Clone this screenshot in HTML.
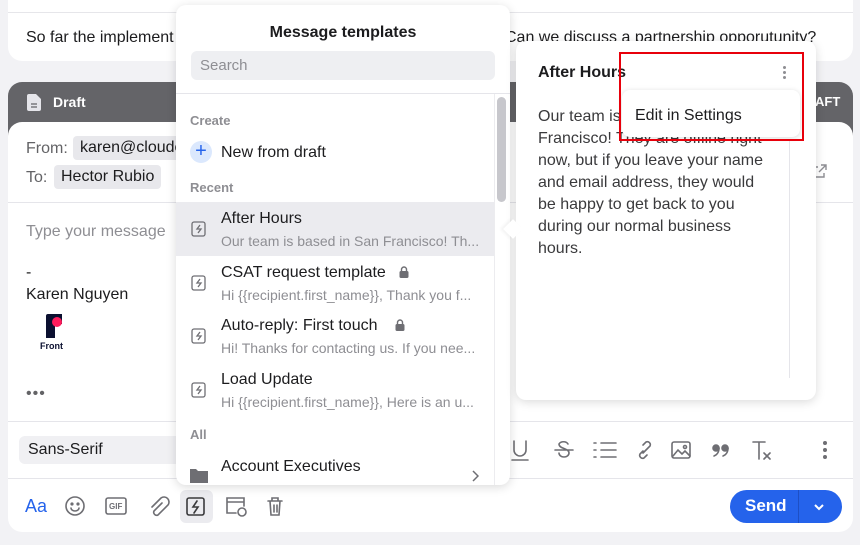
<!DOCTYPE html>
<html><head><meta charset="utf-8"><style>
*{box-sizing:border-box;margin:0;padding:0}
body{width:860px;height:545px;background:#f2f2f5;font-family:"Liberation Sans",Arial,sans-serif;position:relative;overflow:hidden;color:#1c1c1e}
.abs{position:absolute}
.t{white-space:nowrap}
</style></head><body>
<!-- top card -->
<div class="abs" style="left:8px;top:-10px;width:845px;height:71px;background:#fff;border-radius:0 0 14px 14px"></div>
<div class="abs" style="left:8px;top:12px;width:845px;height:1px;background:#e6e6ea"></div>
<div class="abs t" style="left:26px;top:29px;font-size:16px">So far the implement</div>
<div class="abs t" style="left:505px;top:29px;font-size:16px">Can we discuss a partnership opporutunity?</div>

<!-- draft card -->
<div class="abs" style="left:8px;top:82px;width:845px;height:70px;background:#646468;border-radius:14px 14px 0 0"></div>
<svg class="abs" style="left:27px;top:94px" width="15" height="17" viewBox="0 0 15 17"><path d="M2 0h7l5 5v10a2 2 0 0 1-2 2H2a2 2 0 0 1-2-2V2a2 2 0 0 1 2-2z" fill="#e5e5ea"/><path d="M4 10h6M4 13h6" stroke="#646468" stroke-width="1.3"/></svg>
<div class="abs t" style="left:53px;top:94px;font-size:14px;font-weight:bold;color:#fff">Draft</div>
<div class="abs t" style="left:815px;top:94px;font-size:13px;font-weight:bold;color:#fff">AFT</div>
<div class="abs" style="left:8px;top:122px;width:845px;height:410px;background:#fff;border-radius:14px"></div>
<div class="abs t" style="left:26px;top:140px;font-size:16px;color:#636366">From:</div>
<div class="abs t" style="left:73px;top:136px;height:24px;padding:3px 7px;background:#e8e8ec;border-radius:4px;font-size:16px">karen@cloudco.com</div>
<div class="abs t" style="left:26px;top:169px;font-size:16px;color:#636366">To:</div>
<div class="abs t" style="left:54px;top:165px;height:24px;padding:3px 7px;background:#e8e8ec;border-radius:4px;font-size:16px">Hector Rubio</div>
<svg class="abs" style="left:812px;top:163px" width="16" height="16" viewBox="0 0 16 16" fill="none" stroke="#8e8e93" stroke-width="1.4"><path d="M9 2h5v5M14 2L7 9M12 10v4H2V4h4"/></svg>
<div class="abs" style="left:8px;top:202px;width:845px;height:1px;background:#e5e5ea"></div>
<div class="abs t" style="left:26px;top:223px;font-size:16px;color:#8e8e93">Type your message</div>
<div class="abs t" style="left:26px;top:264px;font-size:16px">-</div>
<div class="abs t" style="left:26px;top:286px;font-size:16px">Karen Nguyen</div>
<svg class="abs" style="left:45px;top:314px" width="20" height="26" viewBox="0 0 20 26"><path d="M1 2a2 2 0 0 1 2-2h14v10h-7v14H1z" fill="#0b1030"/><circle cx="12" cy="8" r="5" fill="#ff1c5c"/></svg>
<div class="abs t" style="left:40px;top:341px;font-size:9px;font-weight:bold;color:#0b1030">Front</div>
<div class="abs t" style="left:26px;top:385px;font-size:16px;color:#636366;letter-spacing:1px">•••</div>
<div class="abs" style="left:8px;top:421px;width:845px;height:1px;background:#e5e5ea"></div>
<div class="abs t" style="left:19px;top:436px;width:165px;height:28px;background:#f0f0f3;border-radius:6px;font-size:16px;padding:5px 9px">Sans-Serif</div>
<!-- format icons -->
<svg class="abs" style="left:510px;top:438px" width="330" height="26" viewBox="0 0 330 26" fill="none" stroke="#6e6e73" stroke-width="1.6" stroke-linecap="round">
<path d="M4 3v9a6 6 0 0 0 12 0V3M2 22h16" />
<path d="M58 6a5 4 0 0 0-9 0c0 5 10 4 10 9a5 4 0 0 1-10 0M45 12h18"/>
<path d="M84 5h2M84 12h2M84 19h2M91 5h15M91 12h15M91 19h15"/>
<path d="M133 13l-3 3a3 3 0 0 0 4 4l3-3M137 11l3-3a3 3 0 0 0-4-4l-3 3M133 15l5-5"/>
<rect x="162" y="4" width="18" height="16" rx="2"/><path d="M163 18l5-6 4 4 3-3 5 5"/><circle cx="175" cy="9" r="1.5"/>
<circle cx="206" cy="10" r="3" fill="#6e6e73"/><path d="M209 10c0 4-2 7-5 8"/><circle cx="215" cy="10" r="3" fill="#6e6e73"/><path d="M218 10c0 4-2 7-5 8"/>
<path d="M243 4h12M249 4v17M254 15l6 6M260 15l-6 6"/>
</svg>
<div class="abs" style="left:823px;top:441px;width:4px;height:4px;border-radius:2px;background:#6e6e73;box-shadow:0 7px 0 #6e6e73,0 14px 0 #6e6e73"></div>
<div class="abs" style="left:8px;top:478px;width:845px;height:1px;background:#e5e5ea"></div>
<!-- bottom icons -->
<div class="abs t" style="left:25px;top:496px;font-size:18px;color:#2563eb">Aa</div>
<div class="abs" style="left:180px;top:490px;width:33px;height:33px;background:#ebebef;border-radius:6px"></div>
<svg class="abs" style="left:62px;top:493px" width="240" height="28" viewBox="0 0 240 28" fill="none" stroke="#6e6e73" stroke-width="1.6" stroke-linecap="round">
<circle cx="13" cy="13" r="9"/><path d="M9 15a4 3 0 0 0 8 0" /><circle cx="10" cy="11" r=".8"/><circle cx="16" cy="11" r=".8"/>
<rect x="44" y="5" width="20" height="16" rx="2"/>
<path d="M100 10l-8 8a3 3 0 0 0 4 4l10-10a5 5 0 0 0-7-7l-9 9"/>
<rect x="125" y="5" width="17" height="17" rx="2" stroke="#3a3a3c"/><path d="M135 8l-4 6h5l-4 6" stroke="#3a3a3c"/>
<path d="M174 20h-9V5h17v8M166 9h16"/><circle cx="180" cy="19" r="4"/>
<path d="M206 8h14M210 8V5h6v3M208 8l1 14h8l1-14M212 12v7M215 12v7"/>
</svg>
<div class="abs t" style="left:109px;top:502px;font-size:8px;font-weight:bold;color:#6e6e73">GIF</div>
<div class="abs" style="left:730px;top:490px;width:112px;height:33px;background:#2563eb;border-radius:17px"></div>
<div class="abs" style="left:798px;top:490px;width:1px;height:33px;background:#1e4fc4"></div>
<div class="abs t" style="left:745px;top:496px;font-size:17px;font-weight:bold;color:#fff">Send</div>
<svg class="abs" style="left:812px;top:500px" width="14" height="14" viewBox="0 0 14 14" fill="none" stroke="#fff" stroke-width="2"><path d="M3 5l4 4 4-4"/></svg>

<!-- template popup -->
<div class="abs" style="left:176px;top:5px;width:334px;height:480px;background:#fff;border-radius:10px;box-shadow:0 2px 10px rgba(0,0,0,.15);overflow:hidden">
 <div class="abs t" style="left:0;width:334px;text-align:center;top:19px;font-size:16px;font-weight:bold">Message templates</div>
 <div class="abs t" style="left:15px;top:46px;width:304px;height:29px;background:#eeeff2;border-radius:6px;font-size:15px;color:#8e8e93;padding:6px 9px">Search</div>
 <div class="abs" style="left:0;top:88px;width:334px;height:1px;background:#e5e5ea"></div>
 <div class="abs" style="left:321px;top:92px;width:9px;height:105px;background:#c7c7cc;border-radius:5px"></div>
 <div class="abs" style="left:318px;top:89px;width:1px;height:400px;background:#ececef"></div>
 <div class="abs t" style="left:14px;top:108px;font-size:13px;font-weight:bold;color:#8e8e93">Create</div>
 <div class="abs" style="left:14px;top:136px;width:22px;height:22px;border-radius:11px;background:#dbe8fd;color:#2563eb;font-size:20px;line-height:21px;text-align:center">+</div>
 <div class="abs t" style="left:45px;top:139px;font-size:16px">New from draft</div>
 <div class="abs t" style="left:14px;top:175px;font-size:13px;font-weight:bold;color:#8e8e93">Recent</div>
 <div class="abs" style="left:0;top:197px;width:318px;height:54px;background:#ebebef"></div>
</div>
<div class="abs" style="left:176px;top:5px;width:334px;height:480px">
 <svg class="abs" style="left:15px;top:216px" width="16" height="16" viewBox="0 0 16 16" fill="none" stroke="#6e6e73" stroke-width="1.3"><rect x="1" y="1" width="13" height="14" rx="2"/><path d="M9 4l-3 4h4l-3 4"/></svg>
 <svg class="abs" style="left:15px;top:270px" width="16" height="16" viewBox="0 0 16 16" fill="none" stroke="#6e6e73" stroke-width="1.3"><rect x="1" y="1" width="13" height="14" rx="2"/><path d="M9 4l-3 4h4l-3 4"/></svg>
 <svg class="abs" style="left:15px;top:323px" width="16" height="16" viewBox="0 0 16 16" fill="none" stroke="#6e6e73" stroke-width="1.3"><rect x="1" y="1" width="13" height="14" rx="2"/><path d="M9 4l-3 4h4l-3 4"/></svg>
 <svg class="abs" style="left:15px;top:377px" width="16" height="16" viewBox="0 0 16 16" fill="none" stroke="#6e6e73" stroke-width="1.3"><rect x="1" y="1" width="13" height="14" rx="2"/><path d="M9 4l-3 4h4l-3 4"/></svg>
 <div class="abs t" style="left:45px;top:205px;font-size:16px">After Hours</div>
 <div class="abs t" style="left:45px;top:228px;font-size:14px;color:#8e8e93">Our team is based in San Francisco! Th...</div>
 <div class="abs t" style="left:45px;top:259px;font-size:16px">CSAT request template</div>
 <svg class="abs" style="left:223px;top:261px" width="10" height="12" viewBox="0 0 10 12"><path d="M2.5 5V3.5a2.5 2.5 0 0 1 5 0V5" fill="none" stroke="#6e6e73" stroke-width="1.4"/><rect x="0.5" y="5" width="9" height="7" rx="1.5" fill="#6e6e73"/></svg>
 <div class="abs t" style="left:45px;top:282px;font-size:14px;color:#8e8e93">Hi {{recipient.first_name}}, Thank you f...</div>
 <div class="abs t" style="left:45px;top:312px;font-size:16px">Auto-reply: First touch</div>
 <svg class="abs" style="left:219px;top:314px" width="10" height="12" viewBox="0 0 10 12"><path d="M2.5 5V3.5a2.5 2.5 0 0 1 5 0V5" fill="none" stroke="#6e6e73" stroke-width="1.4"/><rect x="0.5" y="5" width="9" height="7" rx="1.5" fill="#6e6e73"/></svg>
 <div class="abs t" style="left:45px;top:335px;font-size:14px;color:#8e8e93">Hi! Thanks for contacting us. If you nee...</div>
 <div class="abs t" style="left:45px;top:366px;font-size:16px">Load Update</div>
 <div class="abs t" style="left:45px;top:389px;font-size:14px;color:#8e8e93">Hi {{recipient.first_name}}, Here is an u...</div>
 <div class="abs t" style="left:14px;top:422px;font-size:13px;font-weight:bold;color:#8e8e93">All</div>
 <svg class="abs" style="left:14px;top:462px" width="18" height="16" viewBox="0 0 18 16"><path d="M0 2h6l2 2h10v12H0z" fill="#6e6e73"/></svg>
 <div class="abs t" style="left:45px;top:453px;font-size:16px">Account Executives</div>
 <svg class="abs" style="left:295px;top:465px" width="8" height="12" viewBox="0 0 8 12" fill="none" stroke="#6e6e73" stroke-width="1.5"><path d="M2 1l5 5-5 5"/></svg>
</div>

<!-- preview panel -->
<div class="abs" style="left:516px;top:41px;width:300px;height:359px;background:#fff;border-radius:10px;box-shadow:0 2px 10px rgba(0,0,0,.15)"></div>
<div class="abs" style="left:506px;top:222px;width:14px;height:14px;background:#fff;transform:rotate(45deg);box-shadow:-2px 2px 3px rgba(0,0,0,.05)"></div>
<div class="abs" style="left:789px;top:140px;width:1px;height:238px;background:#e5e5ea"></div>
<div class="abs t" style="left:538px;top:64px;font-size:16px;font-weight:bold">After Hours</div>
<div class="abs" style="left:783px;top:66px;width:3px;height:3px;border-radius:2px;background:#8e8e93;box-shadow:0 5px 0 #8e8e93,0 10px 0 #8e8e93"></div>
<div class="abs t" style="left:538px;top:106px;font-size:16px;line-height:22px;color:#3a3a3c">Our team is based in San<br>Francisco! They are offline right<br>now, but if you leave your name<br>and email address, they would<br>be happy to get back to you<br>during our normal business<br>hours.</div>
<div class="abs t" style="left:622px;top:90px;width:178px;height:47px;background:#fff;border-radius:8px;box-shadow:0 1px 6px rgba(0,0,0,.15);font-size:16px;padding:17px 13px">Edit in Settings</div>
<div class="abs" style="left:619px;top:52px;width:185px;height:89px;border:2px solid #e8000b"></div>
</body></html>
